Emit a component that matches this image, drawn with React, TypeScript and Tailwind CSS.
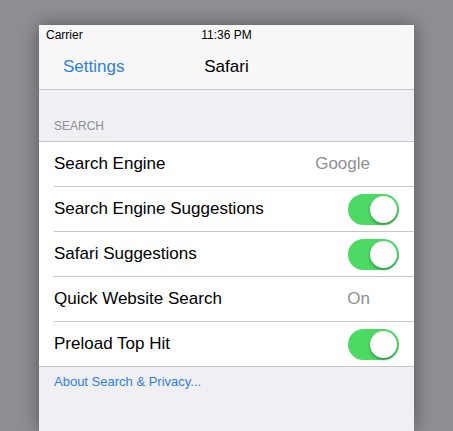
import React from 'react'

type Row = {
  label: string
  value?: string
  toggle?: boolean
}

const rows: Row[] = [
  { label: 'Search Engine', value: 'Google' },
  { label: 'Search Engine Suggestions', toggle: true },
  { label: 'Safari Suggestions', toggle: true },
  { label: 'Quick Website Search', value: 'On' },
  { label: 'Preload Top Hit', toggle: true },
]

function Toggle() {
  return (
    <div className="w-[51px] h-[31px] rounded-full bg-[#4cd964] flex items-center justify-end p-[2px]">
      <div className="w-[27px] h-[27px] rounded-full bg-white shadow-[0_2px_3px_rgba(0,0,0,0.3)]" />
    </div>
  )
}

export default function App() {
  return (
    <div
      className="h-[431px] overflow-hidden bg-[#8e8e93] flex justify-center pt-[25px]"
      style={{ fontFamily: '"Liberation Sans", Arial, sans-serif' }}
    >
      <div className="w-[375px] h-[406px] bg-[#efeff4] flex flex-col shadow-[0_0_18px_rgba(0,0,0,0.4)]">
        {/* Header */}
        <div className="bg-[#f7f7f8] border-b border-[#c8c7cc]">
          <div className="h-[20px] grid grid-cols-3 items-center text-[12px] text-black">
            <span className="pl-[7px]">Carrier</span>
            <span className="text-center">11:36 PM</span>
            <span />
          </div>
          <div className="h-[44px] grid grid-cols-3 items-center text-[17px]">
            <span className="pl-[24px] text-[#2f7fe0]">Settings</span>
            <span className="text-center text-black">Safari</span>
            <span />
          </div>
        </div>

        {/* Section header */}
        <div className="h-[51px] flex items-end pb-[6px] pl-[15px] text-[12px] text-[#8e8e93]">
          SEARCH
        </div>

        {/* Table */}
        <div className="bg-white border-y border-[#c8c7cc]">
          {rows.map((row, i) => (
            <div key={row.label} className="pl-[15px]">
              <div
                className={`flex items-center justify-between text-[17px] text-black ${
                  i < rows.length - 1 ? 'h-[45px] border-b border-[#c8c7cc]' : 'h-[44px]'
                } ${row.toggle ? 'pr-[15px]' : 'pr-[44px]'}`}
              >
                <span>{row.label}</span>
                {row.toggle ? <Toggle /> : <span className="text-[#8e8e93]">{row.value}</span>}
              </div>
            </div>
          ))}
        </div>

        {/* Footer */}
        <div className="pl-[15px] pt-[5px] text-[13px] text-[#2f7fe0]">About Search &amp; Privacy...</div>
      </div>
    </div>
  )
}
